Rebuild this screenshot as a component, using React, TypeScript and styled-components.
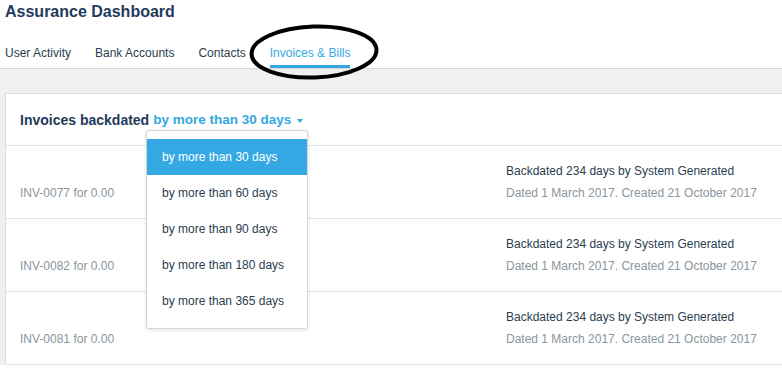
import * as React from "react";
import styled, { createGlobalStyle } from "styled-components";

const GlobalStyle = createGlobalStyle`
  body {
    margin: 0;
    background: #ffffff;
    font-family: "Liberation Sans", Arial, sans-serif;
    overflow: hidden;
  }
`;

const Page = styled.div`
  position: relative;
  width: 782px;
  height: 376px;
  overflow: hidden;
  display: flex;
  flex-direction: column;
`;

const Title = styled.h1`
  margin: 0;
  padding: 0 5px;
  height: 24px;
  line-height: 24px;
  font-size: 16px;
  font-weight: bold;
  color: #1f3a5b;
`;

const Tabs = styled.nav`
  display: flex;
  gap: 24px;
  padding: 16px 5px 0;
  height: 28px;
`;

const Tab = styled.div<{ $active?: boolean }>`
  font-size: 12px;
  line-height: 26px;
  height: 28px;
  box-sizing: border-box;
  color: ${p => (p.$active ? "#34a8e3" : "#2b3d50")};
  border-bottom: 3px solid ${p => (p.$active ? "#34a8e3" : "transparent")};
`;

const Band = styled.div`
  background: #eff0f2;
  border-top: 1px solid #d6d9dc;
  padding: 24px 0 0 5px;
`;

const Card = styled.section`
  background: #ffffff;
  border: 1px solid #dde0e3;
  border-bottom: none;
  margin-right: -20px;
`;

const CardHeader = styled.header`
  position: relative;
  height: 51px;
  border-bottom: 1px solid #e1e4e7;
  padding: 0 14px;
  display: flex;
  align-items: center;
  font-size: 14px;
  font-weight: bold;
  color: #1f3a5b;
`;

const Filter = styled.span`
  color: #34a8e3;
  margin-left: 4px;
  display: inline-flex;
  align-items: center;
  font-size: 13.5px;
`;

const Caret = styled.span`
  margin-left: 6px;
  border-left: 3.5px solid transparent;
  border-right: 3.5px solid transparent;
  border-top: 4px solid #34a8e3;
  margin-top: 2px;
`;

const Menu = styled.ul`
  position: absolute;
  left: 140px;
  top: 36px;
  width: 160px;
  margin: 0;
  padding: 8px 0 9px;
  list-style: none;
  background: #ffffff;
  border: 1px solid #d3d7db;
  border-radius: 3px;
  box-shadow: 0 1px 4px rgba(0, 0, 0, 0.12);
  z-index: 2;
`;

const MenuItem = styled.li<{ $selected?: boolean }>`
  height: 36px;
  line-height: 36px;
  padding-left: 15px;
  font-size: 12px;
  font-weight: normal;
  color: ${p => (p.$selected ? "#ffffff" : "#2b3d50")};
  background: ${p => (p.$selected ? "#34a8e3" : "transparent")};
`;

const Row = styled.div`
  display: flex;
  height: 72px;
  border-bottom: 1px solid #e1e4e7;
  font-size: 12px;
`;

const Ref = styled.div`
  width: 486px;
  padding: 39px 0 0 14px;
  line-height: 16px;
  color: #8a969e;
`;

const Detail = styled.div`
  padding-top: 17px;
  line-height: 16px;
`;

const Primary = styled.div`
  color: #2b3d50;
`;

const Secondary = styled.div`
  color: #8a969e;
  margin-top: 6px;
`;

const Annotation = styled.svg`
  position: absolute;
  left: 247px;
  top: 22px;
  pointer-events: none;
`;

const rows = ["INV-0077", "INV-0082", "INV-0081"];
const options = ["30", "60", "90", "180", "365"];

export default function App() {
  return (
    <Page>
      <GlobalStyle />
      <Title>Assurance Dashboard</Title>
      <Tabs>
        <Tab>User Activity</Tab>
        <Tab>Bank Accounts</Tab>
        <Tab>Contacts</Tab>
        <Tab $active>Invoices &amp; Bills</Tab>
      </Tabs>
      <Band>
        <Card>
          <CardHeader>
            Invoices backdated
            <Filter>
              by more than 30 days
              <Caret />
            </Filter>
            <Menu>
              {options.map((d, i) => (
                <MenuItem key={d} $selected={i === 0}>
                  by more than {d} days
                </MenuItem>
              ))}
            </Menu>
          </CardHeader>
          {rows.map(r => (
            <Row key={r}>
              <Ref>{r} for 0.00</Ref>
              <Detail>
                <Primary>Backdated 234 days by System Generated</Primary>
                <Secondary>Dated 1 March 2017. Created 21 October 2017</Secondary>
              </Detail>
            </Row>
          ))}
        </Card>
      </Band>
      <Annotation width="134" height="60" viewBox="0 0 134 60">
        <ellipse
          cx="67"
          cy="30"
          rx="62.5"
          ry="25.5"
          fill="none"
          stroke="#000"
          strokeWidth="4"
          transform="rotate(-2 67 30)"
        />
      </Annotation>
    </Page>
  );
}
